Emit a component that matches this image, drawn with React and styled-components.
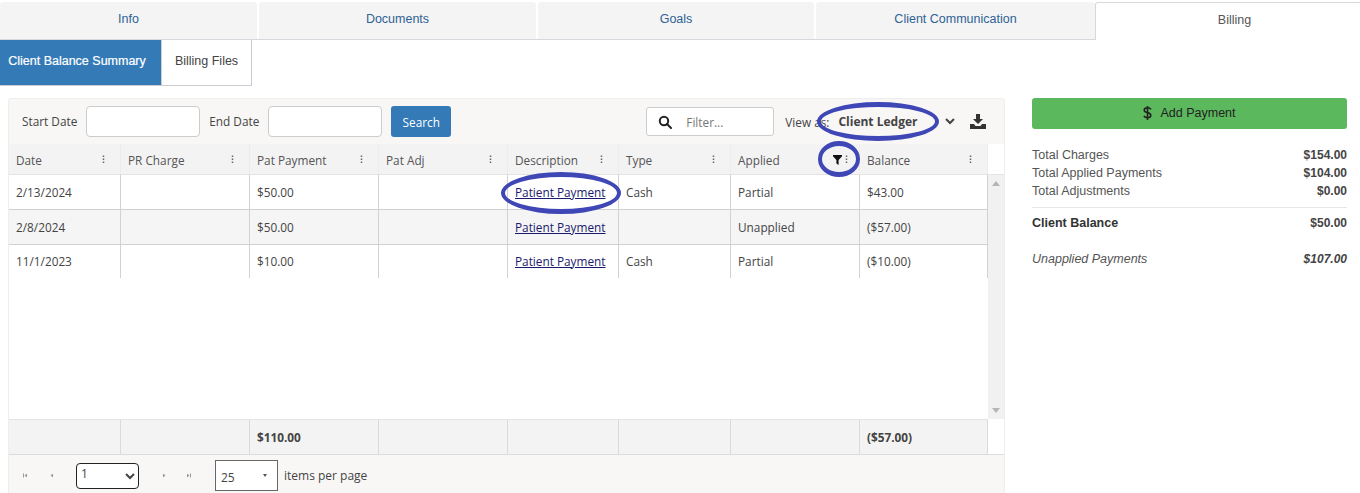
import styled, { createGlobalStyle } from "styled-components";

const GlobalStyle = createGlobalStyle`
  html, body { margin: 0; padding: 0; background: #fff; overflow: hidden; }
  body { font-family: "Liberation Sans", Arial, sans-serif; color: #333; }
`;

const COLS = "112px 129px 129px 129px 111px 112px 129px 128px";
const gridFont = `"Open Sans", "Noto Sans", sans-serif`;

const Page = styled.div`
  width: 1360px;
  height: 493px;
  overflow: hidden;
`;

const Tabs = styled.div`
  display: grid;
  grid-template-columns: 257px 277px 276px 279px 265px;
  column-gap: 2px;
  padding-top: 2px;
  height: 40px;
  box-sizing: border-box;
  border-bottom: 1px solid #d5d8dc;
`;

const Tab = styled.div`
  display: flex;
  align-items: center;
  justify-content: center;
  height: ${(p) => (p.$active ? "38px" : "37px")};
  padding-bottom: 3px;
  box-sizing: border-box;
  font-size: 12.5px;
  border-radius: 3px 3px 0 0;
  color: ${(p) => (p.$active ? "#555" : "#2f6295")};
  background: ${(p) => (p.$active ? "#fff" : "#f4f4f4")};
  ${(p) =>
    p.$active &&
    `border: 1px solid #d5d8dc; border-bottom: none; margin-left: -2px; padding-left: 12px;`}
`;

const SubTabs = styled.div`
  display: flex;
  height: 46px;
`;

const SubTab = styled.div`
  display: flex;
  align-items: center;
  justify-content: center;
  box-sizing: border-box;
  width: ${(p) => p.$w}px;
  padding-bottom: 4px;
  font-size: 12.5px;
  color: ${(p) => (p.$active ? "#fff" : "#444")};
  background: ${(p) => (p.$active ? "#337ab7" : "#fff")};
  border-bottom: 1px solid #c9ccd0;
  ${(p) => !p.$active && "border-right: 1px solid #c9ccd0; border-left: 1px solid #c9ccd0;"}
  ${(p) => p.$active && "padding-right: 7px; -webkit-text-stroke: 0.2px #fff;"}
`;

const Content = styled.div`
  display: flex;
  align-items: flex-start;
  padding: 12px 13px 0 8px;
`;

const GridPanel = styled.div`
  width: 997px;
  height: 395px;
  flex: none;
  box-sizing: border-box;
  background: #f8f7f6;
  border: 1px solid #eeeeee;
  border-bottom: none;
  border-radius: 3px 3px 0 0;
  font-family: ${gridFont};
  font-size: 11.8px;
  color: #444;
  margin-right: 27px;
  display: flex;
  flex-direction: column;
`;

const Toolbar = styled.div`
  height: 45px;
  flex: none;
  display: flex;
  align-items: center;
  padding-left: 13px;
  box-sizing: border-box;
`;

const Label = styled.span`
  margin: 0 9px 2px 0;
`;

const DateInput = styled.div`
  width: 114px;
  height: 31px;
  box-sizing: border-box;
  background: #fff;
  border: 1px solid #ccc;
  border-radius: 4px;
  margin-right: 9px;
`;

const SearchBtn = styled.div`
  width: 60px;
  height: 31px;
  border-radius: 3px;
  background: #337ab7;
  color: #fff;
  display: flex;
  align-items: center;
  justify-content: center;
  margin-right: 195px;
`;

const Filter = styled.div`
  width: 128px;
  height: 29px;
  box-sizing: border-box;
  background: #fff;
  border: 1px solid #ccc;
  border-radius: 3px;
  display: flex;
  align-items: center;
  padding-left: 11px;
  color: #777;
  gap: 14px;
  margin-right: 11px;
`;

const ViewAs = styled.div`
  position: relative;
  display: flex;
  align-items: center;
  width: 156px;
  white-space: nowrap;
`;

const ViewValue = styled.b`
  margin-left: 9px;
  font-size: 12px;
  font-weight: 700;
  color: #444;
`;

const Ring = styled.span`
  position: absolute;
  left: ${(p) => p.$x}px;
  top: ${(p) => p.$y}px;
  width: ${(p) => p.$w}px;
  height: ${(p) => p.$h}px;
  box-sizing: border-box;
  border: 4px solid #3e47b5;
  border-top-width: 5px;
  border-bottom-width: 5px;
  border-radius: 50%;
  pointer-events: none;
  z-index: 2;
`;

const IconBtn = styled.span`
  display: inline-flex;
  margin-left: ${(p) => p.$ml}px;
`;

const GridRow = styled.div`
  display: grid;
  grid-template-columns: ${COLS};
  width: 979px;
  height: ${(p) => p.$h}px;
  box-sizing: border-box;
  flex: none;
`;

const HeadWrap = styled.div`
  background: #fff;
  flex: none;
`;

const HeadCell = styled.div`
  position: relative;
  display: flex;
  align-items: center;
  justify-content: space-between;
  padding: 1px 15px 0 7px;
  background: #f3f3f3;
  border-right: 1px solid #ececec;
  color: #555;
`;

const ActiveFilter = styled.span`
  display: inline-flex;
  align-items: center;
  gap: 3px;
  margin-right: -4px;
`;

const Body = styled.div`
  height: 245px;
  flex: none;
  display: flex;
  background: #fff;
  justify-content: space-between;
  border-top: 1px solid #e4e4e4;
  box-sizing: border-box;
`;

const Rows = styled.div`
  width: 979px;
`;

const Row = styled(GridRow)`
  background: ${(p) => (p.$alt ? "#f5f5f5" : "#fff")};
  border-bottom: ${(p) => (p.$last ? "none" : "1px solid #cfcfcf")};
`;

const Cell = styled.div`
  position: relative;
  display: flex;
  align-items: center;
  padding: 0 0 ${(p) => (p.$tight ? 2 : 0)}px 7px;
  border-right: 1px solid #d2d2d2;
  color: #444;
`;

const PayLink = styled.a`
  color: #1a1a6e;
  text-decoration: underline;
`;

const Scrollbar = styled.div`
  width: 17px;
  background: #f1f1f1;
  display: flex;
  flex-direction: column;
  justify-content: space-between;
  align-items: center;
  padding: 6px 0 6px;
  box-sizing: border-box;
`;

const Arrow = styled.span`
  width: 0;
  height: 0;
  border-left: 4px solid transparent;
  border-right: 4px solid transparent;
  ${(p) => (p.$up ? "border-bottom: 5px solid #b5b5b5;" : "border-top: 5px solid #b5b5b5;")}
`;

const SizeCaret = styled.span`
  width: 0;
  height: 0;
  border-left: 2.5px solid transparent;
  border-right: 2.5px solid transparent;
  border-top: 3px solid #555;
  margin-top: -3px;
`;

const FooterWrap = styled.div`
  background: #fff;
  flex: none;
  border-bottom: 1px solid #dcdcdc;
`;

const FootCell = styled.div`
  display: flex;
  align-items: center;
  padding-left: 7px;
  background: #f3f3f3;
  border-right: 1px solid #dadada;
  border-top: 1px solid #e4e4e4;
  font-weight: 700;
  color: #444;
`;

const Pager = styled.div`
  flex: 1;
  display: flex;
  align-items: center;
  padding: 3px 0 0 14px;
  background: #f8f7f6;
  font-size: 12px;
`;

const PageArrow = styled.span`
  display: inline-flex;
  width: ${(p) => p.$w}px;
`;

const PageSelect = styled.select`
  width: 63px;
  height: 26px;
  box-sizing: border-box;
  margin: 0 23px 0 0;
  border: 1px solid #222;
  border-radius: 4px;
  background: #fff;
  font-family: ${gridFont};
  font-size: 12px;
  color: #444;
  padding: 0 0 4px;
`;

const SizeBox = styled.div`
  width: 63px;
  height: 31px;
  box-sizing: border-box;
  border: 1px solid #666;
  display: flex;
  align-items: center;
  justify-content: space-between;
  padding: 3px 10px 0 5px;
  margin-right: 6px;
  background: #fff;
`;

const Side = styled.div`
  width: 315px;
  flex: none;
  font-size: 12.5px;
  color: #555;
`;

const AddBtn = styled.div`
  height: 31px;
  box-sizing: border-box;
  padding-bottom: 2px;
  border-radius: 3px;
  background: #5cb85c;
  color: #222;
  display: flex;
  align-items: center;
  justify-content: center;
  gap: 8px;
  margin-bottom: 17px;
`;

const Stat = styled.div`
  display: flex;
  justify-content: space-between;
  line-height: 18px;
  height: 18px;
  font-style: ${(p) => (p.$italic ? "italic" : "normal")};
  b { font-size: 12px; font-weight: 700; color: #444; }
`;

const Divider = styled.div`
  border-top: 1px solid #e6e6e6;
  margin: 7px 0 6px;
`;

const BalanceRow = styled(Stat)`
  font-weight: 700;
  margin-bottom: 18px;
  color: #333;
`;

const Dots = () => (
  <svg width="3" height="9" viewBox="0 0 3 9" fill="#666">
    <rect x="0.75" y="0.5" width="1.5" height="1.5" />
    <rect x="0.75" y="3.5" width="1.5" height="1.5" />
    <rect x="0.75" y="6.5" width="1.5" height="1.5" />
  </svg>
);

const SearchIcon = () => (
  <svg width="14" height="14" viewBox="0 0 14 14" fill="none" stroke="#222" strokeWidth="2">
    <circle cx="6" cy="6" r="4.2" />
    <path d="M9 9l4 4" strokeLinecap="round" />
  </svg>
);

const Chevron = () => (
  <svg width="10" height="7" viewBox="0 0 10 7" fill="none" stroke="#444" strokeWidth="2">
    <path d="M1 1l4 4 4-4" />
  </svg>
);

const Download = () => (
  <svg width="16" height="15" viewBox="0 0 16 15" fill="#333">
    <path d="M6 0h4v5h3l-5 5-5-5h3z" />
    <path d="M0 10h4l1.5 2h5l1.5-2h4v5H0z" />
  </svg>
);

const Funnel = () => (
  <svg width="9" height="10" viewBox="0 0 9 10" fill="#111">
    <path d="M0 0h9v1.2L5.6 5v5L3.4 8.6V5L0 1.2z" />
  </svg>
);

const PagerGlyph = ({ dir, bar }) => (
  <svg width="5" height="5" viewBox="0 0 5 5" fill="#999">
    {dir === "left" ? <path d="M4 0.5v4L1.5 2.5z" /> : <path d="M1 0.5v4L3.5 2.5z" />}
    {bar && (dir === "left" ? <rect x="0" y="0.5" width="1" height="4" /> : <rect x="4" y="0.5" width="1" height="4" />)}
  </svg>
);

const headers = ["Date", "PR Charge", "Pat Payment", "Pat Adj", "Description", "Type", "Applied", "Balance"];

const rows = [
  { date: "2/13/2024", pay: "$50.00", type: "Cash", applied: "Partial", balance: "$43.00", h: 35 },
  { date: "2/8/2024", pay: "$50.00", type: "", applied: "Unapplied", balance: "($57.00)", h: 35, alt: true },
  { date: "11/1/2023", pay: "$10.00", type: "Cash", applied: "Partial", balance: "($10.00)", h: 33, last: true },
];

const stats = [
  ["Total Charges", "$154.00"],
  ["Total Applied Payments", "$104.00"],
  ["Total Adjustments", "$0.00"],
];

export default function App() {
  return (
    <Page>
      <GlobalStyle />
      <Tabs>
        <Tab>Info</Tab>
        <Tab>Documents</Tab>
        <Tab>Goals</Tab>
        <Tab>Client Communication</Tab>
        <Tab $active>Billing</Tab>
      </Tabs>
      <SubTabs>
        <SubTab $w={161} $active>Client Balance Summary</SubTab>
        <SubTab $w={91}>Billing Files</SubTab>
      </SubTabs>
      <Content>
        <GridPanel>
          <Toolbar>
            <Label>Start Date</Label>
            <DateInput />
            <Label>End Date</Label>
            <DateInput />
            <SearchBtn>Search</SearchBtn>
            <Filter>
              <SearchIcon />
              Filter...
            </Filter>
            <ViewAs>
              View as:
              <ViewValue>Client Ledger</ViewValue>
              <Ring $x={32} $y={-11} $w={122} $h={39} />
            </ViewAs>
            <IconBtn $ml={4}><Chevron /></IconBtn>
            <IconBtn $ml={15}><Download /></IconBtn>
          </Toolbar>
          <HeadWrap>
            <GridRow $h={30}>
              {headers.map((h) => (
                <HeadCell key={h}>
                  {h}
                  {h === "Applied" ? (
                    <>
                      <Ring $x={87} $y={-3} $w={42} $h={36} />
                      <ActiveFilter>
                        <Funnel />
                        <Dots />
                      </ActiveFilter>
                    </>
                  ) : (
                    <Dots />
                  )}
                </HeadCell>
              ))}
            </GridRow>
          </HeadWrap>
          <Body>
            <Rows>
              {rows.map((r, i) => (
                <Row key={r.date} $h={r.h} $alt={r.alt} $last={r.last}>
                  <Cell $tight={r.last}>{r.date}</Cell>
                  <Cell />
                  <Cell $tight={r.last}>{r.pay}</Cell>
                  <Cell />
                  <Cell $tight={r.last}>
                    <PayLink>Patient Payment</PayLink>
                    {i === 0 && <Ring $x={-7} $y={-3} $w={120} $h={42} />}
                  </Cell>
                  <Cell $tight={r.last}>{r.type}</Cell>
                  <Cell $tight={r.last}>{r.applied}</Cell>
                  <Cell $tight={r.last}>{r.balance}</Cell>
                </Row>
              ))}
            </Rows>
            <Scrollbar>
              <Arrow $up />
              <Arrow />
            </Scrollbar>
          </Body>
          <FooterWrap>
            <GridRow $h={35}>
              <FootCell />
              <FootCell />
              <FootCell>$110.00</FootCell>
              <FootCell />
              <FootCell />
              <FootCell />
              <FootCell />
              <FootCell>($57.00)</FootCell>
            </GridRow>
          </FooterWrap>
          <Pager>
            <PageArrow $w={26}><PagerGlyph dir="left" bar /></PageArrow>
            <PageArrow $w={27}><PagerGlyph dir="left" /></PageArrow>
            <PageSelect defaultValue="1">
              <option value="1">1</option>
            </PageSelect>
            <PageArrow $w={24}><PagerGlyph dir="right" /></PageArrow>
            <PageArrow $w={29}><PagerGlyph dir="right" bar /></PageArrow>
            <SizeBox>
              25
              <SizeCaret />
            </SizeBox>
            items per page
          </Pager>
        </GridPanel>
        <Side>
          <AddBtn>
            <svg width="9" height="14" viewBox="0 0 9 14" fill="none" stroke="#222" strokeWidth="1.6">
              <path d="M8 3.4C7.4 2.3 6 1.8 4.5 1.8 2.6 1.8 1.2 2.7 1.2 4.2c0 3.2 6.6 1.6 6.6 5.1 0 1.5-1.5 2.5-3.3 2.5-1.7 0-3-.7-3.6-1.9M4.5 0v14" />
            </svg>
            Add Payment
          </AddBtn>
          {stats.map(([k, v]) => (
            <Stat key={k}>
              <span>{k}</span>
              <b>{v}</b>
            </Stat>
          ))}
          <Divider />
          <BalanceRow>
            <span>Client Balance</span>
            <b>$50.00</b>
          </BalanceRow>
          <Stat $italic>
            <span>Unapplied Payments</span>
            <b>$107.00</b>
          </Stat>
        </Side>
      </Content>
    </Page>
  );
}
